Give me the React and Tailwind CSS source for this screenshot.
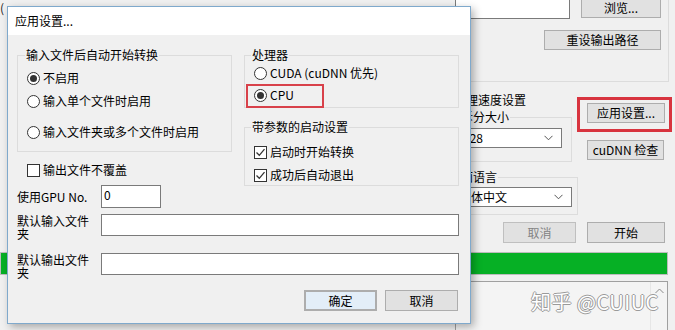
import React from 'react'

function Btn({ className = '', children }) {
  return (
    <div className={`flex items-center justify-center border border-[#adadad] bg-[#e1e1e1] leading-none ${className}`}>
      {children}
    </div>
  )
}

function Radio({ checked }) {
  return (
    <span className="flex h-[13px] w-[13px] shrink-0 items-center justify-center rounded-full border border-[#333] bg-white">
      {checked && <span className="h-[7px] w-[7px] rounded-full bg-[#333]" />}
    </span>
  )
}

function Check({ checked }) {
  return (
    <span className="flex h-[13px] w-[13px] shrink-0 items-center justify-center border border-[#333] bg-white">
      {checked && (
        <svg width="11" height="11" viewBox="0 0 11 11">
          <path d="M1.5 5.5 L4.3 8.3 L9.5 2.2" fill="none" stroke="#333" strokeWidth="1.3" />
        </svg>
      )}
    </span>
  )
}

function Group({ legend, legendClass = 'ml-[7px]', className = '', children }) {
  return (
    <div className={`flex flex-col border border-[#dcdcdc] ${className}`}>
      <div className={`-mt-[9px] h-[16px] w-fit bg-[#f0f0f0] px-[1px] leading-[16px] ${legendClass}`}>{legend}</div>
      {children}
    </div>
  )
}

function Chevron() {
  return (
    <svg width="9" height="6" viewBox="0 0 9 6">
      <path d="M0.5 0.8 L4.5 4.8 L8.5 0.8" fill="none" stroke="#555" strokeWidth="1" />
    </svg>
  )
}

function Select({ className = '', text, pl }) {
  return (
    <div className={`flex items-center justify-between border border-[#7a7a7a] bg-white pr-[8px] ${className}`}>
      <span className={pl}>{text}</span>
      <Chevron />
    </div>
  )
}

export default function App() {
  return (
    <div className="relative h-[330px] w-[675px] overflow-hidden bg-[#f0f0f0] font-['Noto_Sans_CJK_SC',sans-serif] text-[12px] text-black">
      {/* main window behind the dialog */}
      <div className="flex flex-col">
        <div className="flex">
          <div className="w-[455px] pt-[1px] leading-[14px] text-[#222]">(</div>
          <div className="flex w-[220px] flex-col">
            <div className="flex h-[82px] w-[214px] flex-col border-r border-b border-[#dcdcdc]">
              <div className="-mt-[2px] flex">
                <div className="h-[21px] w-[115px] border border-[#7a7a7a] bg-white" />
                <Btn className="ml-[11px] h-[20px] w-[80px]">浏览...</Btn>
              </div>
              <Btn className="mt-[11px] ml-[89px] h-[20px] w-[117px]">重设输出路径</Btn>
            </div>
            <div className="flex">
              <div className="flex w-[123px] flex-col">
                <div className="mt-[10px] h-[16px] leading-[16px] -ml-[1px] whitespace-nowrap">处理速度设置</div>
                <Group legend="拆分大小" legendClass="ml-[9px]" className="mt-[9px] -ml-[5px] w-[122px] pb-[13px]">
                  <Select className="mt-[3px] ml-[4px] h-[20px] w-[107px]" text="128" pl="pl-[7px]" />
                </Group>
                <Group legend="界面语言" legendClass="ml-[7px]" className="mt-[15px] -ml-[15px] w-[138px] pb-[7px]">
                  <Select className="mt-[2px] ml-[14px] h-[20px] w-[117px]" text="简体中文" pl="pl-[3px]" />
                </Group>
                <Btn className="mt-[7px] ml-[48px] h-[21px] w-[73px] border-[#bfbfbf] bg-[#cccccc] text-[#838383]">取消</Btn>
              </div>
              <div className="ml-[9px] flex w-[78px] flex-col">
                <div className="relative mt-[21px]">
                  <Btn className="h-[20px] w-[78px]">应用设置...</Btn>
                  <div className="absolute -left-[10px] -top-[6px] h-[35px] w-[95px] border-[3px] border-[#d8343f]" />
                </div>
                <Btn className="mt-[17px] h-[20px] w-[77px]">cuDNN 检查</Btn>
                <Btn className="mt-[62px] h-[21px] w-[78px]">开始</Btn>
              </div>
            </div>
          </div>
        </div>
        <div className="mt-[9px] h-[23px] w-[668px] border border-[#bcbcbc] bg-[#06b025]" />
        <div className="mt-[6px] ml-[455px] flex h-[60px] w-[213px] justify-end border border-[#a0a0a0] bg-[#f4f4f4]">
          <div className="flex w-[17px] justify-center border-l border-[#e6e6e6] pt-[6px]">
            <svg width="9" height="6" viewBox="0 0 9 6">
              <path d="M0.5 5 L4.5 1 L8.5 5" fill="none" stroke="#8a8a8a" strokeWidth="1" />
            </svg>
          </div>
        </div>
      </div>

      {/* watermark */}
      <div className="absolute left-[531px] top-[289px] text-[20px] leading-[26px] tracking-[0.5px] text-white [text-shadow:-1px_0_#9a9a9a,1px_0_#9a9a9a,0_-1px_#9a9a9a,0_1px_#9a9a9a]">
        知乎 @CUIUC
      </div>

      {/* dialog */}
      <div className="absolute left-[7px] top-[6px] flex w-[464px] flex-col border border-[#7fa9cc] bg-[#f0f0f0] shadow-[3px_3px_8px_rgba(0,0,0,0.3)]">
        <div className="flex h-[28px] items-center bg-white pl-[7px]">应用设置...</div>
        <div className="flex flex-col pl-[9px] pr-[11px] pb-[12px]">
          <div className="flex">
            <div className="flex w-[215px] flex-col">
              <Group legend="输入文件后自动开始转换" className="mt-[20px] pb-[11px]">
                <div className="mt-[7px] ml-[9px] flex h-[16px] items-center gap-[3px]"><Radio checked />不启用</div>
                <div className="mt-[7px] ml-[9px] flex h-[16px] items-center gap-[3px]"><Radio />输入单个文件时启用</div>
                <div className="mt-[15px] ml-[9px] flex h-[16px] items-center gap-[3px]"><Radio />输入文件夹或多个文件时启用</div>
              </Group>
              <div className="mt-[10px] ml-[10px] flex h-[16px] items-center gap-[3px]"><Check />输出文件不覆盖</div>
              <div className="mt-[7px] flex h-[23px] items-center">
                <span className="w-[84px]">使用GPU No.</span>
                <div className="flex h-[23px] w-[60px] items-start border border-[#7a7a7a] bg-white pl-[2px] pt-[1px] leading-[16px]">0</div>
              </div>
            </div>
            <div className="ml-[12px] flex w-[215px] flex-col">
              <Group legend="处理器" legendClass="ml-[6px]" className="mt-[20px] pb-[4px]">
                <div className="mt-[2px] ml-[9px] flex h-[16px] items-center gap-[3px]"><Radio />CUDA (cuDNN 优先)</div>
                <div className="relative mt-[6px] ml-[9px] flex h-[16px] items-center gap-[3px]">
                  <Radio checked />CPU
                  <div className="absolute -left-[8px] -top-[3px] h-[24px] w-[78px] border-2 border-[#d8414a]" />
                </div>
              </Group>
              <Group legend="带参数的启动设置" legendClass="ml-[6px]" className="mt-[19px] pb-[2px]">
                <div className="mt-[9px] ml-[9px] flex h-[16px] items-center gap-[3px]"><Check checked />启动时开始转换</div>
                <div className="mt-[7px] ml-[9px] flex h-[16px] items-center gap-[3px]"><Check checked />成功后自动退出</div>
              </Group>
            </div>
          </div>
          <div className="mt-[6px] flex items-start">
            <div className="w-[84px] pr-[8px] leading-[13px]">默认输入文件夹</div>
            <div className="h-[22px] w-[358px] border border-[#7a7a7a] bg-white" />
          </div>
          <div className="mt-[13px] flex items-start">
            <div className="w-[84px] pr-[8px] leading-[13px]">默认输出文件夹</div>
            <div className="h-[22px] w-[358px] border border-[#7a7a7a] bg-white" />
          </div>
          <div className="mt-[11px] flex justify-end gap-[8px] pr-[1px]">
            <Btn className="h-[21px] w-[73px] border-2 border-[#2a6aa3] bg-[#e3eef8]">确定</Btn>
            <Btn className="h-[21px] w-[73px]">取消</Btn>
          </div>
        </div>
      </div>
    </div>
  )
}
